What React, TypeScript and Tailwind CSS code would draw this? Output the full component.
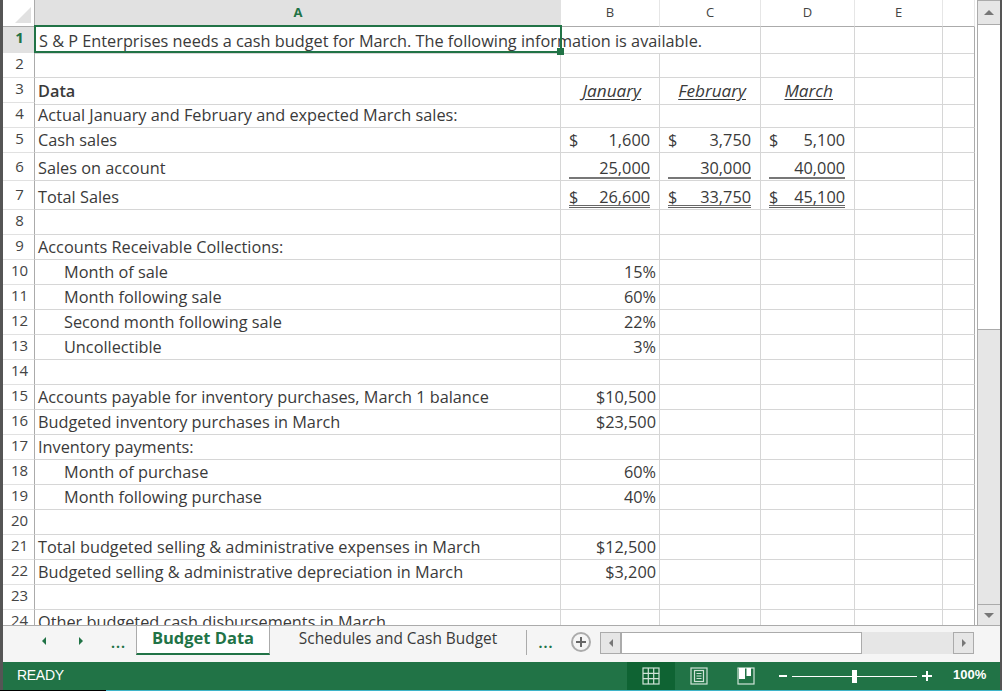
import { ReactNode } from "react";

const font = "font-['Open_Sans',sans-serif]";

type Row = {
  h: number;
  pt?: string;
  numPb?: string;
  a?: ReactNode;
  indent?: boolean;
  b?: ReactNode;
  c?: ReactNode;
  d?: ReactNode;
};

function Acct({ v, mr, line }: { v: string; mr: string; line?: "single" | "double" }) {
  return (
    <div className={`relative flex flex-1 justify-end ${mr}`}>
      <span className="absolute left-[8px]">{v.startsWith("$") ? "$" : ""}</span>
      <span>{v.replace("$", "")}</span>
      {line === "single" && <div className="absolute left-[8px] right-0 bottom-[1px] h-[2px] bg-[#777]" />}
      {line === "double" && (
        <>
          <div className="absolute left-[8px] right-0 bottom-[3px] h-px bg-[#666]" />
          <div className="absolute left-[8px] right-0 bottom-[1px] h-px bg-[#666]" />
        </>
      )}
    </div>
  );
}

const Month = ({ t, pr }: { t: string; pr: string }) => <span className={`w-full text-right text-[17.2px] italic underline underline-offset-2 ${pr}`}>{t}</span>;

const rows: Row[] = [
  { h: 26, pt: "pt-[2px]", numPb: "pb-[5px]" },
  { h: 25 },
  { h: 25, a: <b className="font-semibold">Data</b>, b: <Month t="January" pr="pr-[15px]" />, c: <Month t="February" pr="pr-[11px]" />, d: <Month t="March" pr="pr-[13px]" /> },
  { h: 25, a: "Actual January and February and expected March sales:" },
  { h: 25, a: "Cash sales", b: <Acct v="$1,600" mr="mr-[6px]" />, c: <Acct v="$3,750" mr="mr-[6px]" />, d: <Acct v="$5,100" mr="mr-[1px]" /> },
  { h: 28, pt: "pt-[3px]", numPb: "pb-0", a: "Sales on account", b: <Acct v="25,000" mr="mr-[6px]" line="single" />, c: <Acct v="30,000" mr="mr-[6px]" line="single" />, d: <Acct v="40,000" mr="mr-[1px]" line="single" /> },
  { h: 29, pt: "pt-[4px]", numPb: "pb-[2px]", a: "Total Sales", b: <Acct v="$26,600" mr="mr-[6px]" line="double" />, c: <Acct v="$33,750" mr="mr-[6px]" line="double" />, d: <Acct v="$45,100" mr="mr-[1px]" line="double" /> },
  { h: 25 },
  { h: 25, a: "Accounts Receivable Collections:" },
  { h: 25, a: "Month of sale", indent: true, b: "15%" },
  { h: 25, a: "Month following sale", indent: true, b: "60%" },
  { h: 25, a: "Second month following sale", indent: true, b: "22%" },
  { h: 25, a: "Uncollectible", indent: true, b: "3%" },
  { h: 25 },
  { h: 25, a: "Accounts payable for inventory purchases, March 1 balance", b: "$10,500" },
  { h: 25, a: "Budgeted inventory purchases in March", b: "$23,500" },
  { h: 25, a: "Inventory payments:" },
  { h: 25, a: "Month of purchase", indent: true, b: "60%" },
  { h: 25, a: "Month following purchase", indent: true, b: "40%" },
  { h: 25 },
  { h: 25, a: "Total budgeted selling & administrative expenses in March", b: "$12,500" },
  { h: 25, a: "Budgeted selling & administrative depreciation in March", b: "$3,200" },
  { h: 25 },
  { h: 25, a: "Other budgeted cash disbursements in March" },
];

const cell = "flex items-center border-r border-b border-[#d6d6d6] text-[16.3px] text-[#3a3a3a] whitespace-nowrap";

function Cols({ children }: { children: ReactNode }) {
  return <div className="grid grid-cols-[32px_526px_99px_101px_94px_88px_32px]">{children}</div>;
}

function Sheet() {
  return (
    <div className="h-[625px] overflow-hidden">
      {/* column letters */}
      <Cols>
        <div className="relative h-[27px] bg-white border-r border-b border-[#ababab]">
          <div className="absolute bottom-[3px] right-[3px] h-0 w-0 border-b-[16px] border-l-[16px] border-b-[#e1e1e1] border-l-transparent" />
        </div>
        <div className="flex h-[27px] items-center justify-center border-b-2 border-[#217346] bg-[#e1e1e1] text-[13px] font-bold text-[#217346]">A</div>
        {["B", "C", "D", "E", ""].map((c, i) => (
          <div key={i} className="flex h-[27px] items-center justify-center border-r border-b border-[#ababab] border-r-[#e6e6e6] text-[13px] text-[#444]">
            {c}
          </div>
        ))}
      </Cols>

      {/* rows */}
      {rows.map((r, i) => (
        <div key={i} style={{ height: r.h }}>
          <Cols>
            <div style={{ height: r.h }} className={`flex items-center justify-center border-r border-[#ababab] pl-[2px] text-[15px] ${r.numPb ?? "pb-[4px]"} ${i === 0 ? "bg-[#e1e1e1] font-bold text-[#217346]" : "border-b border-b-[#e1e1e1] text-[#444]"}`}>
              {i + 1}
            </div>
            {i === 0 ? (
              <div className={`${cell} relative col-span-3 pl-[4px] ${r.pt ?? ""}`}>
                S &amp; P Enterprises needs a cash budget for March. The following information is available.
                <div className="absolute left-[-1px] top-[-2px] h-[28px] w-[528px] border-2 border-[#217346]" />
                <div className="absolute left-[522px] top-[21px] h-[7px] w-[7px] bg-[#217346]" />
              </div>
            ) : (
              <div className={`${cell} ${r.pt ?? ""} ${r.indent ? "pl-[29px]" : "pl-[3px]"}`}>{r.a}</div>
            )}
            {i !== 0 && <div className={`${cell} ${r.pt ?? ""} justify-end pr-[3px]`}>{r.b}</div>}
            {i !== 0 && <div className={`${cell} ${r.pt ?? ""} justify-end pr-[3px]`}>{r.c}</div>}
            <div className={`${cell} ${r.pt ?? ""} justify-end pr-[8px]`}>{r.d}</div>
            <div className={cell} />
            <div className={`${cell} border-r-[#ababab]`} />
          </Cols>
        </div>
      ))}
    </div>
  );
}

function VScroll() {
  return (
    <div className="ml-[2px] flex w-[23px] flex-col border-l border-[#ababab] bg-[#e6e6e6]">
      <div className="flex h-[25px] items-center justify-center border-y border-[#ababab] bg-[#e6e6e6]">
        <div className="h-0 w-0 border-x-[5px] border-b-[5px] border-x-transparent border-b-[#777]" />
      </div>
      <div className="h-[305px] border-b border-[#ababab] bg-white" />
      <div className="flex-1" />
      <div className="flex h-[21px] items-center justify-center border-t border-[#ababab] bg-[#e6e6e6]">
        <div className="h-0 w-0 border-x-[5px] border-t-[5px] border-x-transparent border-t-[#777]" />
      </div>
    </div>
  );
}

function TabBar() {
  return (
    <div className="relative flex h-[37px] items-start border-t border-[#ababab] bg-[#f5f5f5]">
      <div className="flex h-[30px] w-[133px] items-center">
        <div className="ml-[39px] h-0 w-0 border-y-[4px] border-r-[4px] border-y-transparent border-r-[#217346]" />
        <div className="ml-[33px] h-0 w-0 border-y-[4px] border-l-[4px] border-l-[#217346] border-y-transparent" />
        <span className="ml-[28px] mb-[-4px] text-[14px] font-bold leading-none tracking-[1px] text-[#217346]">...</span>
      </div>
      <div className="flex h-[29px] w-[134px] items-center justify-center border-x border-[#ababab] border-b-2 border-b-[#217346] bg-white">
        <span className="mb-[2px] text-[16.5px] font-bold text-[#217346]">Budget Data</span>
      </div>
      <div className="flex h-[26px] w-[256px] items-center justify-center text-[15.4px] text-[#3a3a3a]">Schedules and Cash Budget</div>
      <div className="mt-[4px] h-[25px] w-px bg-[#ababab]" />
      <div className="flex h-[33px] w-[38px] items-center justify-center text-[14px] font-bold tracking-[1px] text-[#217346]">...</div>
      <div className="ml-[6px] mt-[6px] flex h-[20px] w-[20px] items-center justify-center rounded-full border-2 border-[#ababab] text-[#666]">
        <svg width="10" height="10" viewBox="0 0 10 10">
          <path d="M5 0v10M0 5h10" stroke="#666" strokeWidth="2" />
        </svg>
      </div>
      {/* horizontal scrollbar */}
      <div className="ml-[9px] mt-[6px] flex h-[22px] w-[374px] bg-[#e6e6e6]">
        <div className="flex w-[21px] items-center justify-center border border-[#ababab]">
          <div className="h-0 w-0 border-y-[4px] border-r-[4px] border-y-transparent border-r-[#777]" />
        </div>
        <div className="w-[241px] border border-[#ababab] bg-white" />
        <div className="flex-1" />
        <div className="flex w-[21px] items-center justify-center border border-[#ababab]">
          <div className="h-0 w-0 border-y-[4px] border-l-[4px] border-y-transparent border-l-[#777]" />
        </div>
      </div>
    </div>
  );
}

function StatusBar() {
  return (
    <div className="flex h-[28px] items-center bg-[#217346] text-white">
      <div className="mb-[2px] w-[624px] pl-[14px] font-['Liberation_Sans',sans-serif] text-[14px] tracking-[-0.3px]">READY</div>
      <div className="flex h-full w-[48px] items-center justify-center bg-[#0f6333]">
        <svg width="18" height="18" viewBox="0 0 18 18" fill="none" stroke="#cfe3d7" strokeWidth="1.2">
          <rect x="1" y="1" width="16" height="16" />
          <path d="M6.3 1v16M11.7 1v16M1 6.3h16M1 11.7h16" />
        </svg>
      </div>
      <div className="flex w-[48px] items-center justify-center">
        <svg width="18" height="18" viewBox="0 0 18 18" fill="none" stroke="#cfe3d7" strokeWidth="1.2">
          <rect x="1" y="1" width="16" height="16" />
          <rect x="4.5" y="3.5" width="9" height="11" />
          <path d="M6.5 6.5h5M6.5 9h5M6.5 11.5h5" />
        </svg>
      </div>
      <div className="flex w-[46px] items-center justify-center">
        <svg width="18" height="18" viewBox="0 0 18 18" fill="none" stroke="#cfe3d7" strokeWidth="1.2">
          <rect x="1" y="1" width="16" height="16" />
          <path d="M2 1h6v11H2zM9.5 1h4.5v8H9.5z" fill="#ffffff" stroke="none" />
        </svg>
      </div>
      <div className="ml-[10px] h-[2px] w-[8px] bg-white" />
      <div className="relative ml-[5px] h-px w-[125px] bg-white">
        <div className="absolute left-[60px] top-[-6px] h-[13px] w-[5px] bg-white" />
      </div>
      <svg className="ml-[5px]" width="10" height="10" viewBox="0 0 10 10">
        <path d="M5 0v10M0 5h10" stroke="#ffffff" strokeWidth="2" />
      </svg>
      <span className="mb-[2px] ml-[21px] font-['Liberation_Sans',sans-serif] text-[13px] font-bold">100%</span>
    </div>
  );
}

export default function App() {
  return (
    <div className={`${font} h-[691px] w-[1008px] overflow-hidden bg-white`}>
      <div className="flex h-[690px] w-[1002px] flex-col border-l-[3px] border-r-2 border-[#555]">
        <div className="flex h-[625px]">
          <div className="w-[972px]">
            <Sheet />
          </div>
          <VScroll />
        </div>
        <TabBar />
        <StatusBar />
      </div>
      <div className="flex h-[1px] w-[1002px]">
        <div className="w-[106px] bg-black" />
        <div className="flex-1 bg-[#3fb5c9]" />
      </div>
    </div>
  );
}
